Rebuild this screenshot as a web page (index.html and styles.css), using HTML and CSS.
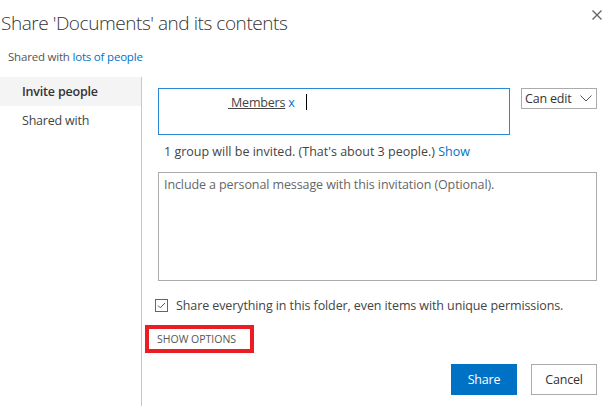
FILE: index.html
```html
<!DOCTYPE html>
<html>
<head>
<meta charset="utf-8">
<link rel="stylesheet" href="styles.css">
</head>
<body>
<div class="dialog">
  <div class="header">
    <h1 class="title">Share 'Documents' and its contents</h1>
    <span class="close" aria-label="Close">
      <svg width="10" height="10" viewBox="0 0 10 10"><path d="M0.5 0.5L9.5 9.5M9.5 0.5L0.5 9.5" stroke="#666" stroke-width="1.4"/></svg>
    </span>
  </div>
  <div class="sub">Shared with <a class="link">lots of people</a></div>
  <div class="main">
    <nav class="nav">
      <div class="nav-item active">Invite people</div>
      <div class="nav-item">Shared with</div>
    </nav>
    <div class="content">
      <div class="row-top">
        <div class="people">
          <span class="entity"><span class="name">&nbsp;Members</span> <span class="remove">x</span></span>
          <span class="caret"></span>
        </div>
        <div class="select">Can edit
          <svg width="12" height="7" viewBox="0 0 12 7"><path d="M0.5 0.5L6 6L11.5 0.5" fill="none" stroke="#555" stroke-width="1"/></svg>
        </div>
      </div>
      <div class="info">1 group will be invited. (That's about 3 people.) <a class="link">Show</a></div>
      <div class="message">Include a personal message with this invitation (Optional).</div>
      <div class="check-row">
        <span class="checkbox">
          <svg width="13" height="13" viewBox="0 0 13 13"><rect x="0.5" y="0.5" width="12" height="12" fill="#fff" stroke="#666"/><path d="M3 6.5L5.3 8.8L10 4" fill="none" stroke="#555" stroke-width="1"/></svg>
        </span>
        <span class="check-label">Share everything in this folder, even items with unique permissions.</span>
      </div>
      <div class="options-wrap">
        <div class="options">SHOW OPTIONS</div>
      </div>
      <div class="buttons">
        <button class="btn primary">Share</button>
        <button class="btn">Cancel</button>
      </div>
    </div>
  </div>
</div>
</body>
</html>
```
FILE: styles.css
```css
html, body {
  margin: 0;
  padding: 0;
  background: #fff;
}
body {
  font-family: "Open Sans", "Noto Sans", sans-serif;
  color: #444;
  width: 614px;
  height: 406px;
  overflow: hidden;
}
.dialog {
  display: flex;
  flex-direction: column;
}
.header {
  display: flex;
  justify-content: space-between;
  align-items: flex-start;
  height: 48px;
}
.title {
  margin: 0;
  padding: 9px 0 0 1px;
  font-weight: 300;
  font-size: 19px;
  line-height: 28px;
  color: #333;
  letter-spacing: -0.45px;
}
.close {
  display: block;
  margin: 10px 12px 0 0;
  width: 10px;
  height: 10px;
}
.close svg { display: block; }
.sub {
  padding-left: 8px;
  font-size: 11.5px;
  line-height: 18px;
  color: #555;
  height: 18px;
  letter-spacing: -0.2px;
}
.link {
  color: #0072c6;
  text-decoration: none;
}
.main {
  display: flex;
  margin-top: 11px;
}
.nav {
  width: 141px;
  border-right: 1px solid #c8c8c8;
  height: 329px;
  flex: none;
}
.nav-item {
  padding-left: 22px;
  font-size: 12.5px;
  height: 29px;
  line-height: 29px;
  color: #444;
  letter-spacing: -0.2px;
}
.nav-item.active {
  background: #f4f4f4;
  font-weight: 600;
  color: #333;
}
.content {
  padding: 11px 0 0 16px;
  width: 439px;
  font-size: 12.5px;
  letter-spacing: -0.1px;
}
.row-top {
  display: flex;
  align-items: flex-start;
  gap: 11px;
}
.people {
  box-sizing: border-box;
  width: 352px;
  height: 47px;
  border: 1px solid #2b88d8;
  padding: 4px 0 0 69px;
  display: flex;
  align-items: flex-start;
  line-height: 19px;
  letter-spacing: -0.2px;
}
.name {
  text-decoration: underline;
  color: #444;
}
.remove {
  color: #0072c6;
}
.caret {
  display: inline-block;
  width: 1px;
  height: 16px;
  background: #000;
  margin: 1px 0 0 11px;
}
.select {
  box-sizing: border-box;
  width: 76px;
  height: 21px;
  border: 1px solid #ababab;
  display: flex;
  align-items: center;
  justify-content: space-between;
  padding: 0 4px 0 3px;
  font-size: 12.5px;
  color: #333;
  letter-spacing: -0.2px;
}
.select svg { display: block; }
.info {
  padding-left: 6px;
  margin-top: 7px;
  line-height: 20px;
  height: 20px;
  letter-spacing: 0;
}
.message {
  box-sizing: border-box;
  margin-top: 10px;
  width: 439px;
  height: 109px;
  border: 1px solid #ababab;
  padding: 3px 5px;
  color: #666;
  line-height: 18px;
}
.check-row {
  display: flex;
  align-items: center;
  margin-top: 17px;
  margin-left: -3px;
  height: 14px;
}
.checkbox {
  width: 13px;
  height: 13px;
  flex: none;
}
.checkbox svg { display: block; }
.check-label {
  margin-left: 8px;
  color: #444;
}
.options-wrap {
  margin-top: 13px;
  margin-left: -13px;
}
.options {
  box-sizing: border-box;
  width: 109px;
  height: 28px;
  border: 4px solid #ec1c24;
  padding-left: 8px;
  font-size: 10.5px;
  line-height: 20px;
  color: #555;
  letter-spacing: 0;
}
.buttons {
  display: flex;
  justify-content: flex-end;
  gap: 14px;
  margin-top: 11px;
}
.btn {
  box-sizing: border-box;
  width: 66px;
  height: 31px;
  border: 1px solid #ababab;
  background: #fff;
  font-family: "Open Sans", "Noto Sans", sans-serif;
  font-size: 12.5px;
  color: #333;
  padding: 0;
  letter-spacing: -0.2px;
}
.btn.primary {
  background: #0072c6;
  border-color: #0072c6;
  color: #fff;
}
```
